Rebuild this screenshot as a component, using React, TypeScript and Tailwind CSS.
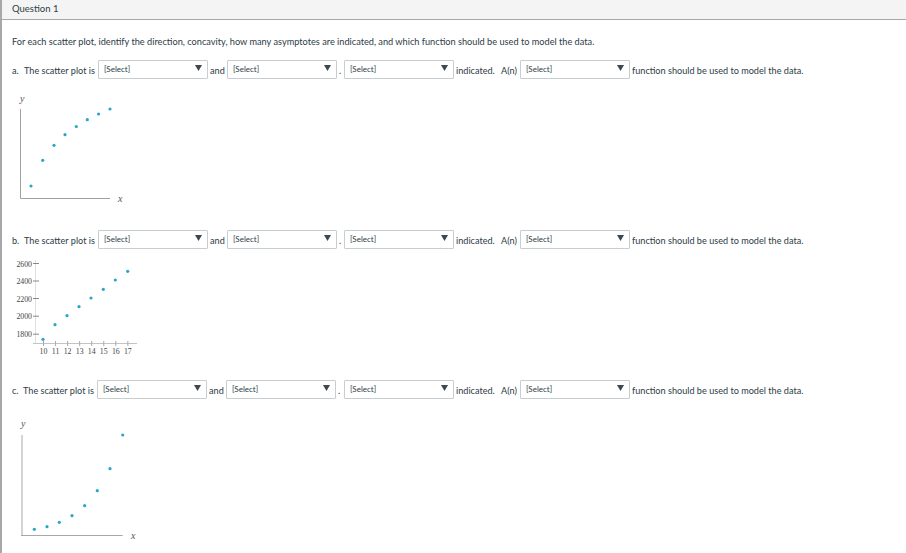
import React from 'react';

const Select = () => (
  <div className="flex h-[19px] w-[110px] shrink-0 items-center justify-between rounded-[1px] border border-[#c7cdd1] bg-white pl-[5px] pr-[5px]">
    <span className="mb-[1px] text-[8px] leading-none text-[#2d3b45]">[Select]</span>
    <svg width="7" height="6" viewBox="0 0 7 6" className="mb-[3px]">
      <path d="M0 0h7L3.5 6z" fill="#3d4850" />
    </svg>
  </div>
);

// row c sits a pixel further left for its first two selects
const QuestionRow = ({ label, tight = false }: { label: string; tight?: boolean }) => (
  <div className="flex h-[19px] items-end whitespace-nowrap pl-[10px] text-[9.15px] leading-[16px] text-[#2d3b45]">
    <span className={tight ? 'w-[11px] shrink-0' : 'w-[12px] shrink-0'}>{label}</span>
    <span className="w-[74px] shrink-0">The scatter plot is</span>
    <Select />
    <span className="ml-[2px] w-[17px] shrink-0">and</span>
    <Select />
    <span className={tight ? 'w-[8px] shrink-0 pl-[2px]' : 'w-[7px] shrink-0 pl-[2px]'}>.</span>
    <Select />
    <span className="ml-[2px] w-[45px] shrink-0">indicated.</span>
    <span className="w-[19px] shrink-0">A(n)</span>
    <Select />
    <span className="ml-[2px]">function should be used to model the data.</span>
  </div>
);

const Dot = ({ x, y }: { x: number; y: number }) => <circle cx={x} cy={y} r="1.6" fill="#2aa7c4" />;

const AxisLabel = ({ x, y, children }: { x: number; y: number; children: string }) => (
  <text x={x} y={y} fontFamily="Liberation Serif, serif" fontStyle="italic" fontSize="10" fill="#555">
    {children}
  </text>
);

const PlotA = () => (
  <svg width="160" height="120" viewBox="2 0 160 120" className="block">
    <AxisLabel x={20} y={12}>y</AxisLabel>
    <path d="M20.500 19V108.500H110" fill="none" stroke="#a0a0a0" />
    <AxisLabel x={118} y={112}>x</AxisLabel>
    {[[31, 96], [42.700, 70.300], [54, 55.300], [65, 44.700], [76.300, 36.500], [87.300, 29.700], [98.600, 24], [110, 19]].map(([x, y]) => (
      <Dot key={x} x={x} y={y} />
    ))}
  </svg>
);

const PlotB = () => {
  const ys = [[2600, 11], [2400, 28.500], [2200, 46], [2000, 63.700], [1800, 81.700]];
  const xs = [10, 11, 12, 13, 14, 15, 16, 17];
  return (
    <svg width="160" height="110" viewBox="2 0 160 110" className="block">
      <path d="M35.500 8V91" fill="none" stroke="#e0e0e0" />
      <path d="M33 91.500H137" fill="none" stroke="#c4c4c4" />
      {ys.map(([v, y]) => (
        <g key={v}>
          <path d={`M33 ${y + 0.5}h6`} stroke="#888" />
          <text x="32" y={y + 3.5} textAnchor="end" fontFamily="Liberation Serif, serif" fontSize="7.800" fill="#444">{v}</text>
        </g>
      ))}
      {xs.map((v, i) => (
        <g key={v}>
          <path d={`M${43.500 + i * 12.05} 89v5`} stroke="#aaa" />
          <text x={43.500 + i * 12.05} y="102" textAnchor="middle" fontFamily="Liberation Serif, serif" fontSize="7.800" fill="#444">{v}</text>
        </g>
      ))}
      {[[43, 87.300], [55, 72.700], [67, 63.700], [79, 54.700], [91, 46], [103.300, 37.300], [115.300, 28], [127.700, 19.300]].map(([x, y]) => (
        <Dot key={x} x={x} y={y} />
      ))}
    </svg>
  );
};

const PlotC = () => (
  <svg width="160" height="154" viewBox="2 0 160 154" className="block">
    <AxisLabel x={21} y={28}>y</AxisLabel>
    <path d="M22 36V136" fill="none" stroke="#d4d4d4" strokeWidth="2" />
    <path d="M21 136.500H122.700" fill="none" stroke="#a8a8a8" />
    <AxisLabel x={131} y={140}>x</AxisLabel>
    {[[34.300, 130.300], [47, 127.700], [59.300, 123.300], [72, 116.700], [84.700, 106.700], [97.300, 91.700], [110, 69.700], [122.700, 36]].map(([x, y]) => (
      <Dot key={x} x={x} y={y} />
    ))}
  </svg>
);

export default function App() {
  return (
    <div className="h-[553px] w-[906px] overflow-hidden bg-white font-['Lato','Liberation_Sans',sans-serif]">
      <div className="h-full border-l-2 border-[#a8a8a8]">
        <div className="flex h-[20px] items-center border-b border-[#a8a8a8] bg-[#f4f4f4] pb-[1px] pl-[10px] text-[9.500px] text-[#2d3b45]">
          Question 1
        </div>
        <p className="mt-[15px] h-[25px] pl-[10px] text-[9.200px] leading-[13px] text-[#2d3b45]">
          For each scatter plot, identify the direction, concavity, how many asymptotes are indicated, and which function should be used to model the data.
        </p>
        <QuestionRow label="a." />
        <div className="h-[151px] pt-[11px]">
          <PlotA />
        </div>
        <QuestionRow label="b." />
        <div className="h-[131px] pt-[3px]">
          <PlotB />
        </div>
        <QuestionRow label="c." tight />
        <PlotC />
      </div>
    </div>
  );
}
